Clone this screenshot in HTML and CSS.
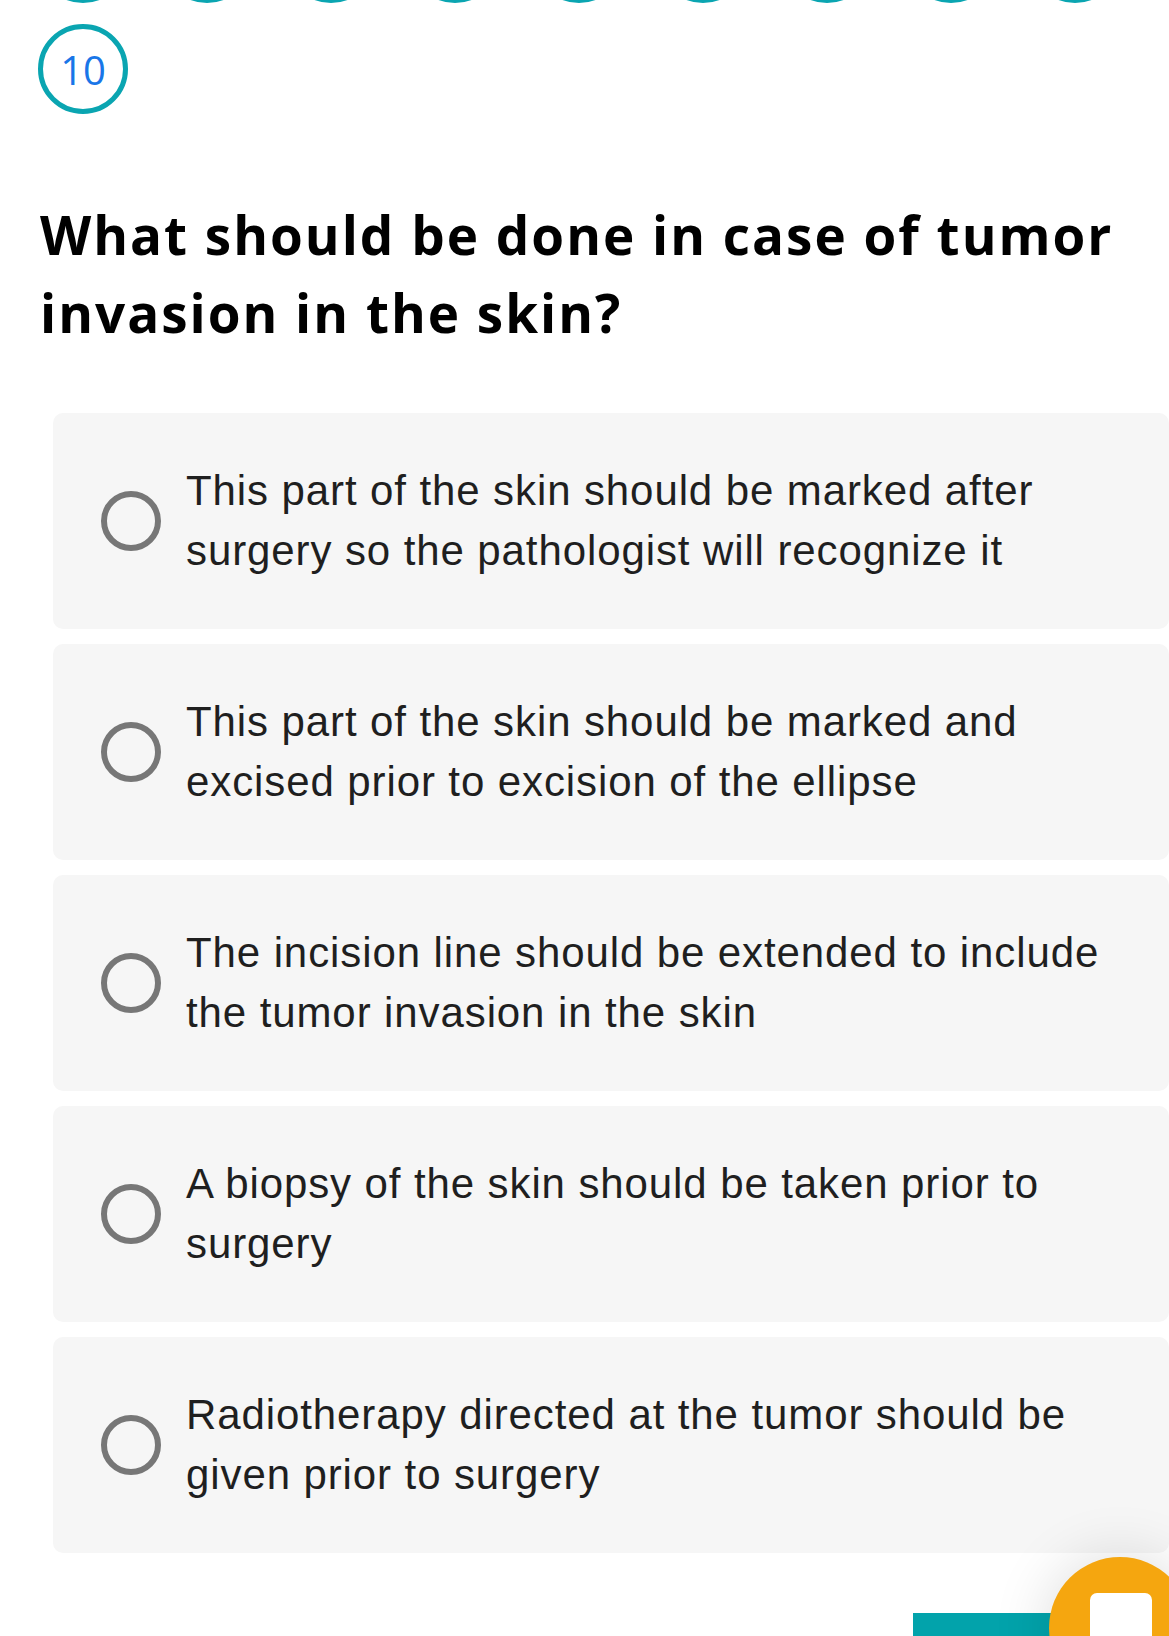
FILE: index.html
```html
<!DOCTYPE html>
<html lang="en">
<head>
    <meta charset="UTF-8">
    <meta name="viewport" content="width=device-width, initial-scale=1.0">
    <title>Quiz question 10</title>
    <link rel="stylesheet" href="styles.css">
</head>
<body>

<!-- steps 1-9 sit on the row above, scrolled out of view -->
<div class="steps">
    <div class="step"></div>
    <div class="step"></div>
    <div class="step"></div>
    <div class="step"></div>
    <div class="step"></div>
    <div class="step"></div>
    <div class="step"></div>
    <div class="step"></div>
    <div class="step"></div>
    <div class="step current">10</div>
</div>

<h1 class="question">What should be done in case of tumor invasion in the skin?</h1>

<ul class="answers">
    <li class="answer">
        <span class="radio"></span>
        <span class="answer-text">This part of the skin should be marked after surgery so the pathologist will recognize it</span>
    </li>
    <li class="answer">
        <span class="radio"></span>
        <span class="answer-text">This part of the skin should be marked and excised prior to excision of the ellipse</span>
    </li>
    <li class="answer">
        <span class="radio"></span>
        <span class="answer-text">The incision line should be extended to include the tumor invasion in the skin</span>
    </li>
    <li class="answer">
        <span class="radio"></span>
        <span class="answer-text">A biopsy of the skin should be taken prior to surgery</span>
    </li>
    <li class="answer">
        <span class="radio"></span>
        <span class="answer-text">Radiotherapy directed at the tumor should be given prior to surgery</span>
    </li>
</ul>

<div class="footer">
    <button class="next-btn"></button>
</div>

<div class="chat-fab">
    <span class="chat-icon"></span>
</div>

</body>
</html>
```

FILE: styles.css
```css
html {
    overflow: hidden;
}
body {
    margin: 0;
    background-color: #fff;
    font-family: "Liberation Sans", Arial, sans-serif;
}
.steps {
    display: flex;
    flex-wrap: wrap;
    column-gap: 34px;
    row-gap: 21px;
    padding-left: 38px;
    margin-top: -87px;
}
.step {
    box-sizing: border-box;
    width: 90px;
    height: 90px;
    border: 5px solid #0aa5b1;
    border-radius: 50%;
    display: flex;
    justify-content: center;
    align-items: center;
    font-family: "Open Sans", sans-serif;
    font-size: 40px;
    color: #1976e8;
}
.question {
    font-family: "Open Sans", sans-serif;
    font-size: 53px;
    font-weight: 700;
    line-height: 78px;
    color: #000;
    margin: 82px 40px 0 40px;
    letter-spacing: 2px;
}
.answers {
    list-style-type: none;
    margin: 61px 0 0 53px;
    padding: 0;
}
.answer {
    display: flex;
    align-items: center;
    gap: 25px;
    background-color: #f6f6f6;
    border-radius: 10px;
    padding: 48px 48px;
    margin-bottom: 15px;
}
.radio {
    flex: none;
    box-sizing: border-box;
    width: 60px;
    height: 60px;
    border: 6px solid #777;
    border-radius: 50%;
}
.answer-text {
    font-size: 42px;
    line-height: 60px;
    letter-spacing: 0.9px;
    color: #1f1f1f;
}
.footer {
    margin-top: 60px;
    padding-left: 913px;
}
.next-btn {
    display: block;
    width: 100%;
    height: 24px;
    border: none;
    background-color: #02a3ab;
}
.chat-fab {
    position: fixed;
    right: -22px;
    bottom: -63px;
    width: 142px;
    height: 142px;
    border-radius: 50%;
    background-color: #f5a60f;
    box-shadow: 0 0 60px rgba(0, 0, 0, 0.14);
}
.chat-icon {
    position: absolute;
    left: 41px;
    top: 36px;
    width: 62px;
    height: 56px;
    border-radius: 7px;
    background-color: #fff;
}
```
